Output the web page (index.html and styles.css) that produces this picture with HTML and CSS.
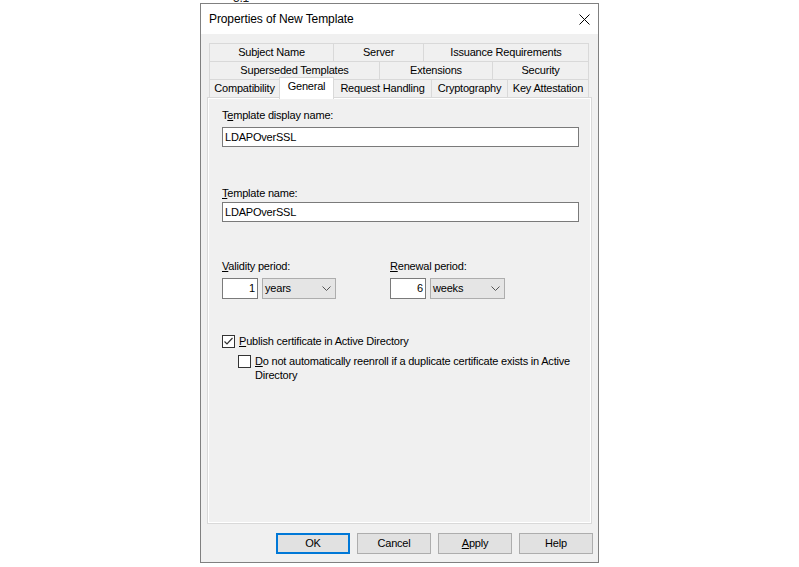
FILE: index.html
```html
<!DOCTYPE html>
<html lang="en">
<head>
<meta charset="utf-8">
<title>Properties of New Template</title>
<link rel="stylesheet" href="styles.css">
</head>
<body>
<div class="peek"><span class="peek-text">5.1</span></div>
<div class="dialog">
  <div class="titlebar">
    <span class="title">Properties of New Template</span>
    <svg class="close" width="11" height="11" viewBox="0 0 11 11"><path d="M0.5 0.5 L10.5 10.5 M10.5 0.5 L0.5 10.5" stroke="#000" stroke-width="1" fill="none"/></svg>
  </div>
  <div class="body">
    <div class="tabs">
      <div class="tabrow r1">
        <div class="tab">Subject Name</div>
        <div class="tab">Server</div>
        <div class="tab">Issuance Requirements</div>
      </div>
      <div class="tabrow r2">
        <div class="tab">Superseded Templates</div>
        <div class="tab">Extensions</div>
        <div class="tab">Security</div>
      </div>
      <div class="tabrow r3">
        <div class="tab">Compatibility</div>
        <div class="tab active">General</div>
        <div class="tab">Request Handling</div>
        <div class="tab">Cryptography</div>
        <div class="tab">Key Attestation</div>
      </div>
    </div>
    <div class="panel">
      <div class="lbl lbl-first">T<u>e</u>mplate display name:</div>
      <div class="field field-first">LDAPOverSSL</div>
      <div class="lbl lbl-second"><u>T</u>emplate name:</div>
      <div class="field field-second">LDAPOverSSL</div>
      <div class="periods">
        <div class="period">
          <div class="lbl"><u>V</u>alidity period:</div>
          <div class="period-inputs">
            <div class="num">1</div>
            <div class="combo"><span>years</span><svg class="chev" width="9" height="5" viewBox="0 0 9 5"><polyline points="0.5,0.5 4.5,4.5 8.5,0.5" fill="none" stroke="#555" stroke-width="1"/></svg></div>
          </div>
        </div>
        <div class="period">
          <div class="lbl"><u>R</u>enewal period:</div>
          <div class="period-inputs">
            <div class="num">6</div>
            <div class="combo combo-wide"><span>weeks</span><svg class="chev" width="9" height="5" viewBox="0 0 9 5"><polyline points="0.5,0.5 4.5,4.5 8.5,0.5" fill="none" stroke="#555" stroke-width="1"/></svg></div>
          </div>
        </div>
      </div>
      <div class="check check-first">
        <span class="box"><svg width="11" height="11" viewBox="0 0 11 11"><polyline points="1.5,5.5 4,8 9.5,2" fill="none" stroke="#333" stroke-width="1.2"/></svg></span>
        <span class="check-text"><u>P</u>ublish certificate in Active Directory</span>
      </div>
      <div class="check check-second">
        <span class="box"></span>
        <span class="check-text"><u>D</u>o not automatically reenroll if a duplicate certificate exists in Active Directory</span>
      </div>
    </div>
    <div class="buttons">
      <div class="btn btn-default">OK</div>
      <div class="btn">Cancel</div>
      <div class="btn"><u>A</u>pply</div>
      <div class="btn">Help</div>
    </div>
  </div>
</div>
</body>
</html>
```
FILE: styles.css
```css
html, body {
  margin: 0;
  padding: 0;
  background: #ffffff;
}
body {
  font-family: "Liberation Sans", Arial, sans-serif;
  font-size: 11px;
  letter-spacing: -0.2px;
  color: #000;
}
u {
  text-decoration: underline;
  text-decoration-thickness: 1px;
  text-underline-offset: 1px;
}
.peek {
  height: 3px;
  overflow: hidden;
  padding-left: 233px;
}
.peek-text {
  display: block;
  font-size: 12px;
  line-height: 12px;
  margin-top: -8px;
  color: #222;
}
.dialog {
  box-sizing: border-box;
  width: 399px;
  height: 560px;
  margin-left: 200px;
  border: 1px solid #808080;
  background: #f0f0f0;
  display: flex;
  flex-direction: column;
}
.titlebar {
  height: 30px;
  background: #ffffff;
  display: flex;
  align-items: center;
  justify-content: space-between;
  padding: 0 8px 0 8px;
  flex: none;
}
.title {
  font-size: 12px;
  letter-spacing: -0.1px;
  line-height: 30px;
}
.close {
  display: block;
}
.body {
  flex: 1;
  display: flex;
  flex-direction: column;
  padding: 9px 6px 8px 6px;
  min-height: 0;
}
.tabs {
  margin-left: 2px;
  width: 380px;
  flex: none;
}
.tabrow {
  display: grid;
  grid-auto-rows: 18px;
  border-left: 1px solid #d9d9d9;
}
.r1 { grid-template-columns: 124px 90px 165px; }
.r2 { grid-template-columns: 170px 113px 96px; }
.r3 { grid-template-columns: 70px 54px 98px 76px 81px; }
.tab {
  box-sizing: border-box;
  height: 18px;
  border-top: 1px solid #d9d9d9;
  border-right: 1px solid #d9d9d9;
  background: #f0f0f0;
  text-align: center;
  line-height: 17px;
  white-space: nowrap;
}
.tab.active {
  position: relative;
  z-index: 1;
  background: #ffffff;
  margin-top: -2px;
  margin-bottom: -2px;
  margin-left: -1px;
  height: 22px;
  border-left: 1px solid #d9d9d9;
}
.panel {
  flex: 1;
  border: 1px solid #d9d9d9;
  box-shadow: inset 0 0 0 1px #ffffff;
  background: #f0f0f0;
  padding: 11px 12px 0 14px;
  display: flex;
  flex-direction: column;
}
.lbl {
  line-height: 13px;
  height: 13px;
  white-space: nowrap;
}
.field {
  box-sizing: border-box;
  height: 20px;
  border: 1px solid #7a7a7a;
  background: #ffffff;
  padding-left: 2px;
  line-height: 18px;
}
.field-first { margin-top: 5px; }
.lbl-second { margin-top: 40px; }
.field-second { margin-top: 2px; }
.periods {
  display: grid;
  grid-template-columns: 168px auto;
  margin-top: 38px;
}
.period-inputs {
  display: flex;
  gap: 4px;
  margin-top: 5px;
}
.num {
  box-sizing: border-box;
  width: 36px;
  height: 21px;
  border: 1px solid #7a7a7a;
  background: #ffffff;
  text-align: right;
  padding-right: 2px;
  line-height: 19px;
}
.combo {
  box-sizing: border-box;
  width: 74px;
  height: 21px;
  border: 1px solid #adadad;
  background: #e5e5e5;
  display: flex;
  align-items: center;
  justify-content: space-between;
  padding: 0 4px 0 2px;
  line-height: 19px;
}
.combo-wide { width: 75px; }
.chev { display: block; }
.check {
  display: flex;
  align-items: flex-start;
  gap: 4px;
}
.check-first { margin-top: 36px; }
.check-second { margin-top: 7px; margin-left: 16px; }
.box {
  box-sizing: border-box;
  width: 13px;
  height: 13px;
  border: 1px solid #333333;
  background: #ffffff;
  flex: none;
  display: flex;
  align-items: center;
  justify-content: center;
}
.box svg { display: block; }
.check-text {
  line-height: 13px;
}
.check-second .check-text {
  width: 320px;
  line-height: 14px;
  margin-top: -1px;
}
.buttons {
  flex: none;
  display: flex;
  justify-content: flex-end;
  gap: 7px;
  margin-top: 9px;
  margin-right: -1px;
}
.btn {
  box-sizing: border-box;
  width: 74px;
  height: 21px;
  border: 1px solid #adadad;
  background: #e1e1e1;
  text-align: center;
  line-height: 19px;
}
.btn-default {
  border: 2px solid #0078d7;
  line-height: 17px;
}
```
